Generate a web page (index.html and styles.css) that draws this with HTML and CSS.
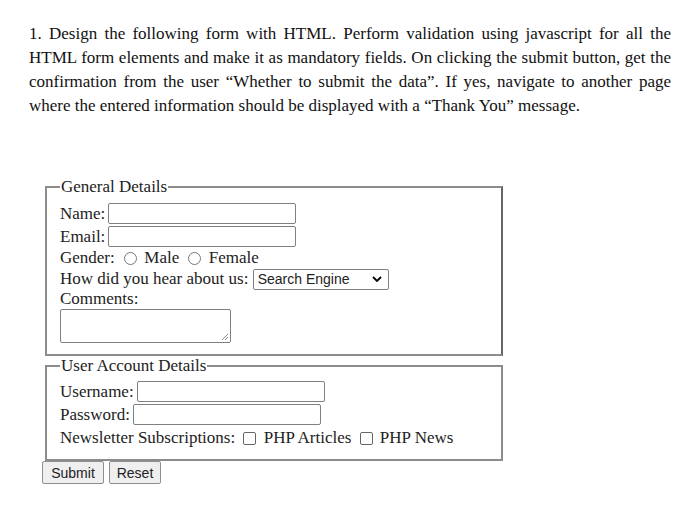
FILE: index.html
```html
<!DOCTYPE html>
<html>
<head>
<meta charset="utf-8">
<link rel="stylesheet" href="styles.css">
</head>
<body>
<p class="task">1. Design the following form with HTML. Perform validation using javascript for all the HTML form elements and make it as mandatory fields. On clicking the submit button, get the confirmation from the user “Whether to submit the data”. If yes, navigate to another page where the entered information should be displayed with a “Thank You” message.</p>
<form class="form">
  <fieldset class="box box-general">
    <legend class="legend">General Details</legend>
    <div class="row row-input"><label>Name:</label><span class="field"></span></div>
    <div class="row row-input"><label>Email:</label><span class="field"></span></div>
    <div class="row row-text">Gender: <span class="radio"></span> Male <span class="radio"></span> Female</div>
    <div class="row row-select">How did you hear about us: <span class="select">Search Engine<svg class="chev" viewBox="0 0 10 6" width="10" height="6"><path d="M1 1 L5 5 L9 1" fill="none" stroke="#000" stroke-width="1.8"/></svg></span></div>
    <div class="row row-label">Comments:</div>
    <div class="row-area"><span class="area"><svg class="grip" viewBox="0 0 8 8" width="8" height="8"><path d="M7 1 L1 7 M7 4 L4 7" stroke="#8a8a8a" stroke-width="1"/></svg></span></div>
  </fieldset>
  <fieldset class="box box-account">
    <legend class="legend">User Account Details</legend>
    <div class="row row-input"><label>Username:</label><span class="field"></span></div>
    <div class="row row-input"><label>Password:</label><span class="field"></span></div>
    <div class="row row-news">Newsletter Subscriptions: <span class="check"></span> PHP Articles <span class="check"></span> PHP News</div>
  </fieldset>
  <div class="buttons"><span class="btn btn-submit">Submit</span><span class="btn btn-reset">Reset</span></div>
</form>
</body>
</html>
```
FILE: styles.css
```css
html, body {
  margin: 0;
  padding: 0;
  background: #fff;
}
body {
  font-family: "Liberation Serif", "Times New Roman", serif;
  color: #1a1a1a;
}
.task {
  margin: 22px 29px 0 29px;
  font-size: 17px;
  line-height: 24px;
  text-align: justify;
  color: #111;
}
.form {
  margin: 59px 0 0 45px;
  width: 458px;
}
.box {
  margin: 0;
  border: 2px solid #8c8c8c;
  padding: 5px 13px 11px 13px;
  font-size: 17px;
  color: #222;
}
.box-general {
  border-right-color: #666;
}
.box-account {
  padding-top: 4px;
  padding-bottom: 9px;
}
.legend {
  padding: 0 1px;
  margin-left: 0;
  line-height: 20px;
}
.row {
  display: flex;
  align-items: center;
  white-space: pre;
}
.row-input {
  height: 23px;
}
.row-text {
  height: 20px;
}
.row-select {
  height: 22px;
}
.row-label {
  height: 18px;
}
.row-news {
  height: 24px;
}
.field {
  display: inline-block;
  width: 186px;
  height: 19px;
  border: 1px solid #808080;
  border-radius: 2px;
  margin-left: 3px;
}
.radio {
  display: inline-block;
  width: 11px;
  height: 11px;
  border: 1px solid #777;
  border-radius: 50%;
  margin: 0 3px 0 5px;
}
.check {
  display: inline-block;
  width: 11px;
  height: 11px;
  border: 1px solid #666;
  border-radius: 2px;
  margin: 0 3px 0 4px;
}
.select {
  display: inline-flex;
  align-items: center;
  justify-content: space-between;
  box-sizing: border-box;
  width: 136px;
  height: 21px;
  padding: 0 6px 0 4px;
  border: 1px solid #808080;
  border-radius: 2px;
  font-family: "Liberation Sans", Arial, sans-serif;
  font-size: 14px;
  color: #222;
}
.row-area {
  height: 34px;
  display: flex;
  align-items: flex-start;
  padding-top: 1px;
}
.area {
  display: inline-flex;
  align-items: flex-end;
  justify-content: flex-end;
  box-sizing: border-box;
  width: 171px;
  height: 34px;
  border: 1px solid #808080;
  border-radius: 2px;
  padding: 0 1px 1px 0;
}
.buttons {
  display: flex;
  gap: 5px;
  margin-left: -3px;
  margin-top: 0;
}
.btn {
  display: inline-flex;
  align-items: center;
  justify-content: center;
  box-sizing: border-box;
  height: 23px;
  border: 1px solid #8f8f8f;
  border-radius: 2px;
  background: #efefef;
  font-family: "Liberation Sans", Arial, sans-serif;
  font-size: 14px;
  color: #222;
}
.btn-submit {
  width: 62px;
}
.btn-reset {
  width: 52px;
}
```
